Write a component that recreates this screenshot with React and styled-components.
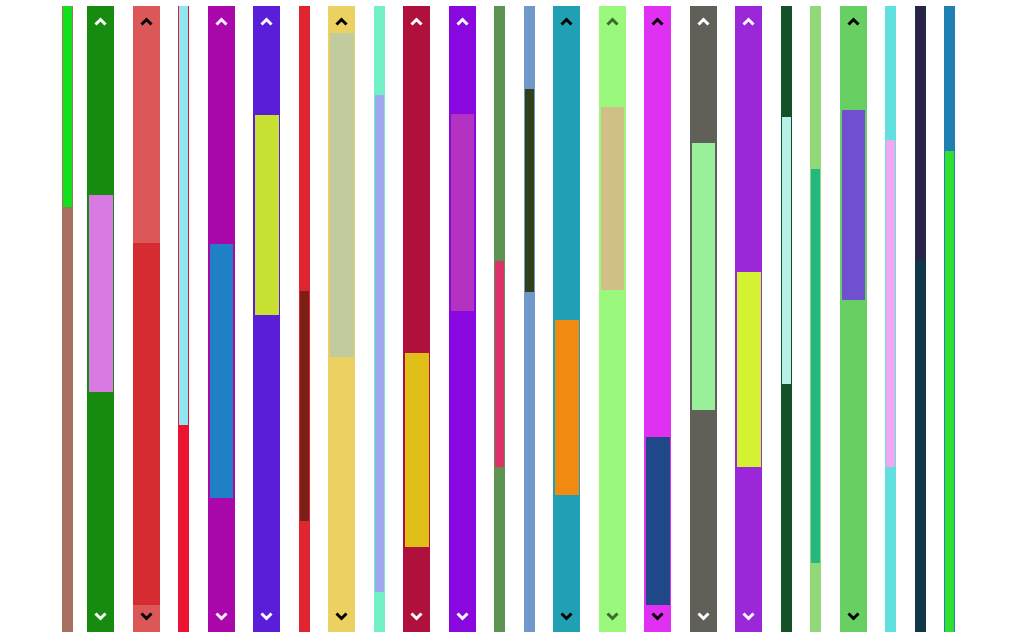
import React from "react";
import styled, { createGlobalStyle } from "styled-components";

const Global = createGlobalStyle`
  html, body { margin: 0; padding: 0; background: #ffffff; }
  body { font-family: "Liberation Sans", Arial, sans-serif; }
`;

const Strip = styled.div`
  display: flex;
  align-items: flex-start;
  gap: 18.5px;
  padding: 6px 0 0 62px;
  height: 632px;
  box-sizing: border-box;
`;

const Track = styled.div`
  display: flex;
  flex-direction: column;
  flex: none;
  width: ${(p) => (p.$wide ? 27 : 11)}px;
  height: 626px;
  background: ${(p) => p.$track};
  margin-right: ${(p) => p.$pull || 0}px;
`;

const Gap = styled.div`
  flex: none;
`;

const Rest = styled.div`
  flex: 1;
`;

const Thumb = styled.div`
  flex: none;
  margin: ${(p) => (p.$flush ? "0" : p.$wide ? "0 1.5px 0 2px" : "0 1px")};
  background: ${(p) => p.$color};
`;

const Button = styled.div`
  flex: none;
  height: 27px;
  display: flex;
  justify-content: center;
  align-items: ${(p) => (p.$down ? "flex-start" : "flex-end")};
  padding: ${(p) => (p.$down ? "6px 0 0" : "0 0 6px")};
  box-sizing: border-box;
  background: ${(p) => p.$bg};
`;

const Chevron = ({ down, color }) => (
  <svg width="13" height="11" viewBox="0 0 13 11">
    <polyline
      points={down ? "1.5,2.5 6.5,7.5 11.5,2.5" : "1.5,8.5 6.5,3.5 11.5,8.5"}
      fill="none"
      stroke={color}
      strokeWidth="3"
      strokeLinecap="butt"
      strokeLinejoin="miter"
    />
  </svg>
);

// page y of each thumb's top and bottom edge; the track starts at y = 6
const bars = [
  { track: "#a86e60", thumb: "#12e21e", from: 6, to: 207, pull: -4.5 },
  { wide: true, track: "#178a10", thumb: "#d87ae2", from: 195, to: 392, arrow: "#ffffff" },
  { wide: true, track: "#d42c30", thumb: "#dc5858", btn: "#dc5858", flush: true, from: 33, to: 243, arrow: "#000000" },
  { track: "#ee1232", thumb: "#8ee8f2", from: 6, to: 425 },
  { wide: true, track: "#aa08aa", thumb: "#2080c6", from: 244, to: 498, arrow: "#fff2ff" },
  { wide: true, track: "#5a1ed8", thumb: "#c8e032", from: 115, to: 315, arrow: "#ffffff" },
  { track: "#e02430", thumb: "#7a2018", from: 291, to: 521 },
  { wide: true, track: "#ecd062", thumb: "#c0cc9e", from: 33, to: 357, arrow: "#000000" },
  { track: "#72f0c8", thumb: "#a0a8f0", from: 95, to: 592 },
  { wide: true, track: "#b0103c", thumb: "#e0c018", from: 353, to: 547, arrow: "#ffffff" },
  { wide: true, track: "#8a08e0", thumb: "#b432c2", from: 114, to: 311, arrow: "#ffffff" },
  { track: "#5e9452", thumb: "#e0306a", from: 261, to: 467 },
  { track: "#7098c8", thumb: "#304018", from: 89, to: 292 },
  { wide: true, track: "#20a0b2", thumb: "#f08a10", from: 320, to: 495, arrow: "#000000" },
  { wide: true, track: "#9af87c", thumb: "#d0c088", from: 107, to: 290, arrow: "#3c6a30" },
  { wide: true, track: "#e030f2", thumb: "#204888", from: 437, to: 605, arrow: "#000000" },
  { wide: true, track: "#606058", thumb: "#98f09a", from: 143, to: 410, arrow: "#ffffff" },
  { wide: true, track: "#9a28d8", thumb: "#d2f232", from: 272, to: 467, arrow: "#ffffff" },
  { track: "#145028", thumb: "#b8f0e8", from: 117, to: 384 },
  { track: "#92d878", thumb: "#22b880", from: 169, to: 563 },
  { wide: true, track: "#68d062", thumb: "#7050d0", from: 110, to: 300, arrow: "#000000" },
  { track: "#62e0e0", thumb: "#f0a8f2", from: 140, to: 467 },
  { track: "#103848", thumb: "#2a2248", from: 6, to: 260 },
  { track: "#2080b2", thumb: "#32e032", from: 151, to: 632 },
];

const TOP = 6;
const BTN = 27;

function Scrollbar({ bar }) {
  const start = TOP + (bar.wide ? BTN : 0);
  const bg = bar.btn || bar.track;
  return (
    <Track $wide={bar.wide} $track={bar.track} $pull={bar.pull}>
      {bar.wide && (
        <Button $bg={bg}>
          <Chevron color={bar.arrow} />
        </Button>
      )}
      <Gap style={{ height: bar.from - start }} />
      <Thumb
        $wide={bar.wide}
        $flush={bar.flush}
        $color={bar.thumb}
        style={{ height: bar.to - bar.from }}
      />
      <Rest />
      {bar.wide && (
        <Button $down $bg={bg}>
          <Chevron down color={bar.arrow} />
        </Button>
      )}
    </Track>
  );
}

export default function App() {
  return (
    <>
      <Global />
      <Strip>
        {bars.map((bar, i) => (
          <Scrollbar key={i} bar={bar} />
        ))}
      </Strip>
    </>
  );
}
